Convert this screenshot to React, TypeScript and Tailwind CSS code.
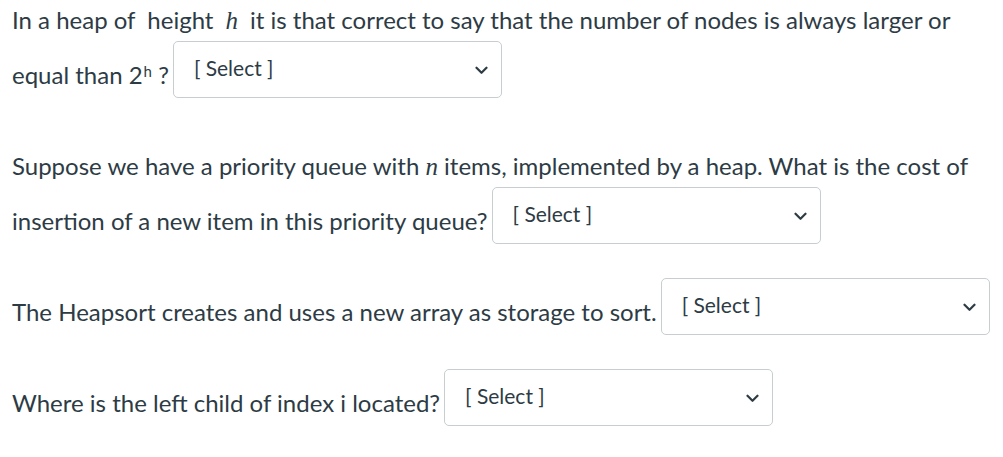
function SelectBox() {
  return (
    <span className="inline-flex justify-between w-[329px] h-[57px] ml-[4px] mt-[5px] mb-[4px] pl-[20px] pr-[12px] border border-[#c7cdd1] rounded-[5px] bg-white align-[8px]">
      <span className="self-start pt-[15px] text-[21px] leading-[21px] text-[#2d3b45]">[ Select ]</span>
      <svg width="13" height="9" viewBox="0 0 13 9" className="self-center mt-[1px] mr-[1px]" fill="none">
        <path d="M1.5 1.75 L6.5 6.75 L11.5 1.75" stroke="#2d3b45" strokeWidth="2.2" strokeLinecap="round" strokeLinejoin="round" />
      </svg>
    </span>
  );
}

function MathVar({ children, spaced }: { children: string; spaced?: boolean }) {
  return (
    <span className={spaced ? "font-['Liberation_Serif',serif] italic text-[25px] leading-none mx-[12px]" : "font-['Liberation_Serif',serif] italic text-[25px] leading-none"}>
      {children}
    </span>
  );
}

export default function App() {
  return (
    <div className="min-h-screen bg-white pl-[12px] pr-[4px] text-[24px] leading-[33px] text-[#2d3b45] font-['Lato','Noto_Sans',sans-serif]">
      <div className="flex flex-col">
        <p className="mt-[3px]">
          In a heap of &nbsp;height<MathVar spaced>h</MathVar>it is that correct to say that the number of nodes is always larger or equal than 2
          <sup className="text-[15px] leading-none ml-[1px]">h</sup> ?
          <SelectBox />
        </p>
        <p className="mt-[47px]">
          Suppose we have a priority queue with <MathVar>n</MathVar> items, implemented by a heap. What is the cost of insertion of a new item in this priority queue?
          <SelectBox />
        </p>
        <p className="mt-[25px]">
          The Heapsort creates and uses a new array as storage to sort.
          <SelectBox />
        </p>
        <p className="mt-[25px]">
          Where is the left child of index i located?
          <SelectBox />
        </p>
      </div>
    </div>
  );
}
